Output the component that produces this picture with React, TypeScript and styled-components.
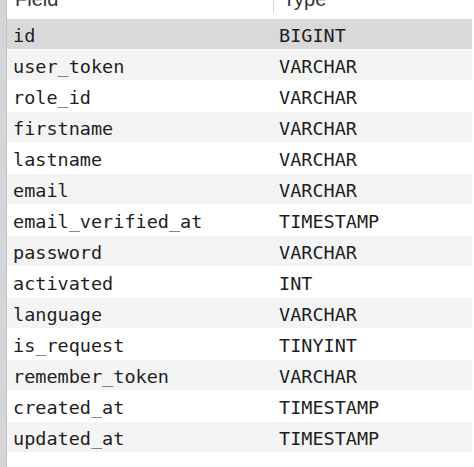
import React from "react";
import styled, { createGlobalStyle } from "styled-components";

const Global = createGlobalStyle`
  html, body { margin: 0; padding: 0; background: #ffffff; }
  body { overflow: hidden; }
`;

const Page = styled.div`
  display: flex;
  width: 474px;
  height: 467px;
  background: #ffffff;
  overflow: hidden;
`;

const SideStrip = styled.div`
  width: 6px;
  flex: none;
  background: #d6d6da;
  border-right: 1px solid #c4c4c8;
`;

const Table = styled.div`
  flex: 1;
  display: flex;
  flex-direction: column;
  padding-right: 2px;
`;

const Header = styled.div`
  display: grid;
  grid-template-columns: 266px 1fr;
  height: 18px;
  margin-bottom: 1px;
  overflow: hidden;
`;

const HeaderCell = styled.div<{ $sep?: boolean }>`
  font-family: "Liberation Sans", Arial, sans-serif;
  font-size: 20px;
  color: #333;
  line-height: 20px;
  margin-top: -11px;
  padding-left: ${(p) => (p.$sep ? "9px" : "8px")};
  border-left: ${(p) => (p.$sep ? "1px solid #d4d4d4" : "none")};
  height: 24px;
`;

const Rows = styled.div`
  display: flex;
  flex-direction: column;
  gap: 1px;
`;

const Row = styled.div<{ $selected?: boolean; $striped?: boolean }>`
  display: grid;
  grid-template-columns: 266px 1fr;
  height: 30px;
  align-items: center;
  background: ${(p) => (p.$selected ? "#d9d9d9" : p.$striped ? "#f4f4f4" : "#ffffff")};
`;

const Cell = styled.div`
  font-family: "DejaVu Sans Mono", Menlo, monospace;
  font-size: 18.5px;
  color: #1e1e1e;
  padding-left: 6px;
  white-space: nowrap;
  padding-top: 2px;
`;

const fields: [string, string][] = [
  ["id", "BIGINT"],
  ["user_token", "VARCHAR"],
  ["role_id", "VARCHAR"],
  ["firstname", "VARCHAR"],
  ["lastname", "VARCHAR"],
  ["email", "VARCHAR"],
  ["email_verified_at", "TIMESTAMP"],
  ["password", "VARCHAR"],
  ["activated", "INT"],
  ["language", "VARCHAR"],
  ["is_request", "TINYINT"],
  ["remember_token", "VARCHAR"],
  ["created_at", "TIMESTAMP"],
  ["updated_at", "TIMESTAMP"],
];

export default function App() {
  return (
    <>
      <Global />
      <Page>
        <SideStrip />
        <Table>
          <Header>
            <HeaderCell>Field</HeaderCell>
            <HeaderCell $sep>Type</HeaderCell>
          </Header>
          <Rows>
            {fields.map(([f, t], i) => (
              <Row key={f} $selected={i === 0} $striped={i % 2 === 1}>
                <Cell>{f}</Cell>
                <Cell>{t}</Cell>
              </Row>
            ))}
          </Rows>
        </Table>
      </Page>
    </>
  );
}
